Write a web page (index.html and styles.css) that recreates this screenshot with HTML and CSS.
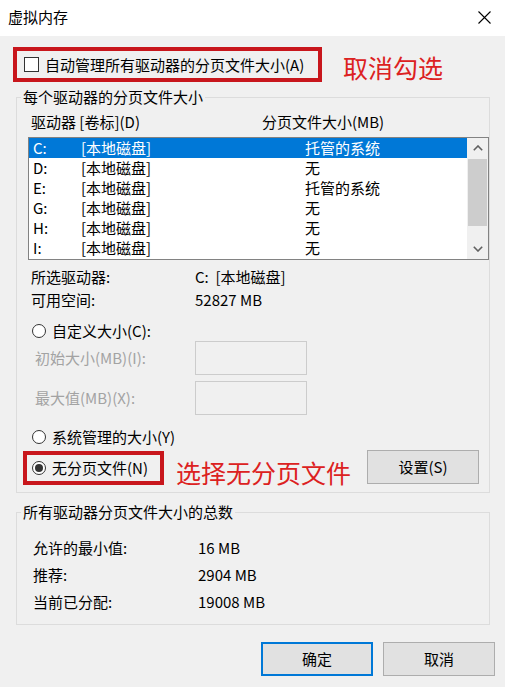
FILE: index.html
```html
<!DOCTYPE html>
<html lang="zh-CN">
<head>
<meta charset="utf-8">
<title>虚拟内存</title>
<link rel="stylesheet" href="styles.css">
</head>
<body>
<div class="dialog">
  <header class="titlebar">
    <span class="title">虚拟内存</span>
    <svg class="close" width="13" height="13" viewBox="0 0 13 13" aria-label="关闭"><path d="M0.5 0.5L12.5 12.5M12.5 0.5L0.5 12.5" stroke="#000" stroke-width="1.1" fill="none"/></svg>
  </header>
  <main class="body">
    <div class="auto-row">
      <label class="mark mark-auto"><span class="checkbox"></span><span>自动管理所有驱动器的分页文件大小(A)</span></label>
      <span class="note note-top">取消勾选</span>
    </div>

    <fieldset class="group group-drives">
      <legend>每个驱动器的分页文件大小</legend>
      <div class="list-head"><span>驱动器 [卷标](D)</span><span>分页文件大小(MB)</span></div>
      <div class="listbox">
        <div class="rows">
          <div class="row selected"><span>C:</span><span>[本地磁盘]</span><span>托管的系统</span></div>
          <div class="row"><span>D:</span><span>[本地磁盘]</span><span>无</span></div>
          <div class="row"><span>E:</span><span>[本地磁盘]</span><span>托管的系统</span></div>
          <div class="row"><span>G:</span><span>[本地磁盘]</span><span>无</span></div>
          <div class="row"><span>H:</span><span>[本地磁盘]</span><span>无</span></div>
          <div class="row"><span>I:</span><span>[本地磁盘]</span><span>无</span></div>
        </div>
        <div class="scrollbar">
          <div class="arrow"><svg width="10" height="6" viewBox="0 0 10 6"><path d="M0.8 5.2L5 1L9.2 5.2" stroke="#606060" stroke-width="1.6" fill="none"/></svg></div>
          <div class="track"><div class="thumb"></div></div>
          <div class="arrow"><svg width="10" height="6" viewBox="0 0 10 6"><path d="M0.8 0.8L5 5L9.2 0.8" stroke="#606060" stroke-width="1.6" fill="none"/></svg></div>
        </div>
      </div>

      <div class="info">
        <span>所选驱动器:</span><span>C:&nbsp;&nbsp;[本地磁盘]</span>
        <span>可用空间:</span><span>52827 MB</span>
      </div>

      <label class="radio radio-custom"><span class="circle"></span><span>自定义大小(C):</span></label>
      <div class="size-row"><span>初始大小(MB)(I):</span><span class="textbox"></span></div>
      <div class="size-row size-row-max"><span>最大值(MB)(X):</span><span class="textbox"></span></div>
      <label class="radio radio-system"><span class="circle"></span><span>系统管理的大小(Y)</span></label>

      <div class="last-row">
        <label class="mark mark-none"><span class="circle checked"></span><span>无分页文件(N)</span></label>
        <span class="note note-bottom">选择无分页文件</span>
        <button class="btn btn-setting" type="button">设置(S)</button>
      </div>
    </fieldset>

    <fieldset class="group group-total">
      <legend>所有驱动器分页文件大小的总数</legend>
      <div class="totals">
        <span>允许的最小值:</span><span>16 MB</span>
        <span>推荐:</span><span>2904 MB</span>
        <span>当前已分配:</span><span>19008 MB</span>
      </div>
    </fieldset>

    <div class="actions">
      <button class="btn btn-primary" type="button">确定</button>
      <button class="btn" type="button">取消</button>
    </div>
  </main>
</div>
</body>
</html>
```

FILE: styles.css
```css
* { box-sizing: border-box; }
html, body { margin: 0; padding: 0; }
body {
  width: 505px;
  height: 687px;
  overflow: hidden;
  background: #f0f0f0;
  color: #000;
  font-family: "Noto Sans CJK SC", "Microsoft YaHei", sans-serif;
  font-size: 15px;
  line-height: 20px;
}
.dialog { display: flex; flex-direction: column; height: 687px; }

.titlebar {
  height: 36px;
  background: #fff;
  display: flex;
  align-items: center;
  justify-content: space-between;
  padding: 0 14px 0 8px;
}
.title { line-height: 20px; margin-top: -2px; }
.close { display: block; margin-top: -2px; }

.body { display: flex; flex-direction: column; }

.auto-row { display: flex; align-items: flex-start; margin: 11px 0 0 13px; height: 35px; }
.mark { border: 4px solid #c8161c; display: flex; align-items: center; gap: 6px; }
.mark-auto { width: 309px; height: 35px; padding-left: 7px; }
.checkbox { width: 15px; height: 15px; border: 1px solid #333; background: #fff; flex: none; }
.note { color: #dc2121; font-size: 25px; line-height: 30px; white-space: nowrap; }
.note-top { margin-left: 21px; margin-top: 5px; }

.group {
  margin: 5px 15px 0 16px;
  border: 1px solid #dcdcdc;
  padding: 5px 0 5px 0;
  min-inline-size: 0;
}
.group legend { padding: 0 2px; margin-left: 4px; line-height: 20px; }

.list-head { display: grid; grid-template-columns: 231px auto; padding-left: 14px; height: 20px; }
.listbox {
  margin: 5px 0 0 11px;
  border: 1px solid #828282;
  background: #fff;
  display: flex;
  height: 123px;
}
.rows { width: 438px; }
.row { display: grid; grid-template-columns: 48px 224px auto; padding-left: 4px; height: 20px; line-height: 20px; }
.row.selected { background: #0078d7; color: #fff; }
.scrollbar { width: 21px; background: #f0f0f0; display: flex; flex-direction: column; }
.arrow { height: 20px; display: flex; align-items: center; justify-content: center; }
.arrow svg { display: block; }
.track { flex: 1; }
.thumb { margin: 1px 1px 0 1px; height: 67px; background: #cdcdcd; }

.info { display: grid; grid-template-columns: 164px auto; margin-top: 5px; padding-left: 14px; line-height: 23px; }

.radio { display: flex; align-items: center; gap: 6px; height: 20px; margin-left: 15px; }
.circle {
  width: 14px; height: 14px; border-radius: 50%;
  border: 1px solid #333; background: #fff; flex: none;
  display: flex; align-items: center; justify-content: center;
}
.circle.checked::after { content: ""; width: 8px; height: 8px; border-radius: 50%; background: #333; }
.radio-custom { margin-top: 10px; }
.radio-system { margin-top: 12px; }

.size-row { display: grid; grid-template-columns: 160px 112px; align-items: center; height: 34px; padding-left: 18px; color: #a3a3a3; }
.size-row-max { margin-top: 6px; }
.textbox { height: 34px; border: 1px solid #cccccc; background: #f0f0f0; }

.last-row { display: flex; align-items: flex-start; margin-top: 3px; }
.mark-none { margin: 1px 0 0 6px; width: 141px; height: 34px; padding-left: 5px; }
.note-bottom { margin-left: 12px; margin-top: 7px; }

.btn {
  width: 112px; height: 34px;
  background: #e1e1e1; border: 1px solid #adadad;
  font-family: inherit; font-size: 15px; line-height: 20px; color: #000;
  padding: 0;
}
.btn-setting { margin-left: auto; margin-right: 10px; }
.btn-primary { border: 2px solid #0078d7; }

.group-total { margin-top: 9px; padding: 12px 0 9px 0; }
.totals { display: grid; grid-template-columns: 165px auto; padding-left: 16px; line-height: 27px; }

.actions { display: flex; justify-content: flex-end; gap: 10px; margin-top: 17px; padding-right: 10px; }
```
